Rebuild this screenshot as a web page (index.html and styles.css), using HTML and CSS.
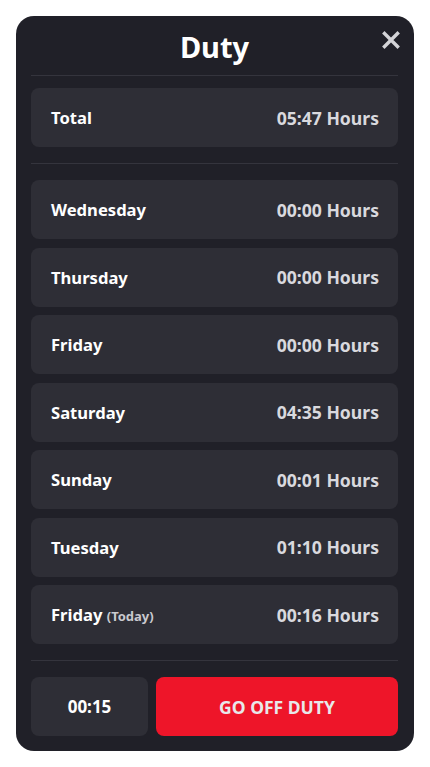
FILE: index.html
```html
<!DOCTYPE html>
<html lang="en">
<head>
<meta charset="utf-8">
<title>Duty</title>
<link rel="stylesheet" href="styles.css">
</head>
<body>
<div class="card">
  <header class="header">
    <h1 class="title">Duty</h1>
    <button class="close" aria-label="Close">
      <svg width="18" height="18" viewBox="0 0 18 18"><path d="M2.5 2.5 L15.5 15.5 M15.5 2.5 L2.5 15.5" stroke="#d4d4d8" stroke-width="3.4" stroke-linecap="square" fill="none"/></svg>
    </button>
  </header>
  <div class="divider"></div>
  <div class="row total"><span class="label">Total</span><span class="value">05:47 Hours</span></div>
  <div class="divider mid"></div>
  <div class="list">
    <div class="row"><span class="label">Wednesday</span><span class="value">00:00 Hours</span></div>
    <div class="row"><span class="label">Thursday</span><span class="value">00:00 Hours</span></div>
    <div class="row"><span class="label">Friday</span><span class="value">00:00 Hours</span></div>
    <div class="row"><span class="label">Saturday</span><span class="value">04:35 Hours</span></div>
    <div class="row"><span class="label">Sunday</span><span class="value">00:01 Hours</span></div>
    <div class="row"><span class="label">Tuesday</span><span class="value">01:10 Hours</span></div>
    <div class="row"><span class="label">Friday <small class="today">(Today)</small></span><span class="value">00:16 Hours</span></div>
  </div>
  <div class="divider mid"></div>
  <div class="footer">
    <div class="timer">00:15</div>
    <button class="offduty">GO OFF DUTY</button>
  </div>
</div>
</body>
</html>
```

FILE: styles.css
```css
* { box-sizing: border-box; }
html, body { margin: 0; background: #ffffff; }
body {
  padding: 16px;
  font-family: "Noto Sans", "Open Sans", sans-serif;
}
.card {
  width: 398px;
  height: 735px;
  background: #202028;
  border-radius: 18px;
  padding: 0 16px 15px 15px;
  display: flex;
  flex-direction: column;
}
.header {
  height: 60px;
  display: flex;
  align-items: center;
  justify-content: center;
  position: relative;
}
.title {
  margin: 0;
  color: #ffffff;
  font-size: 29px;
  font-weight: 700;
  line-height: 1;
  padding-top: 2px;
}
.close {
  position: absolute;
  right: -2px;
  top: 15px;
  background: none;
  border: 0;
  padding: 0;
  width: 18px;
  height: 18px;
  cursor: pointer;
}
.close svg { display: block; }
.divider {
  height: 1px;
  background: #34343d;
  flex: none;
}
.divider.mid { margin: 16px 0; }
.row {
  height: 59px;
  flex: none;
  background: #2e2e36;
  border-radius: 8px;
  display: flex;
  align-items: center;
  justify-content: space-between;
  padding: 0 19px 0 20px;
  font-size: 17px;
  font-weight: 700;
}
.total { margin-top: 12px; }
.label { color: #ffffff; font-size: 16.6px; }
.value { color: #d9d9de; font-size: 17.6px; }
.today {
  font-size: 13px;
  color: #c9c9cf;
  font-weight: 700;
}
.list {
  display: flex;
  flex-direction: column;
  gap: 8.5px;
}
.footer {
  display: flex;
  gap: 8px;
  height: 60px;
}
.timer {
  width: 117px;
  background: #2e2e36;
  border-radius: 8px;
  color: #ffffff;
  font-size: 17px;
  font-weight: 700;
  display: flex;
  align-items: center;
  justify-content: center;
}
.offduty {
  flex: 1;
  background: #ee1529;
  border: 0;
  border-radius: 8px;
  color: #e8e8ea;
  font-family: inherit;
  font-size: 17.5px;
  font-weight: 700;
  cursor: pointer;
}
```
